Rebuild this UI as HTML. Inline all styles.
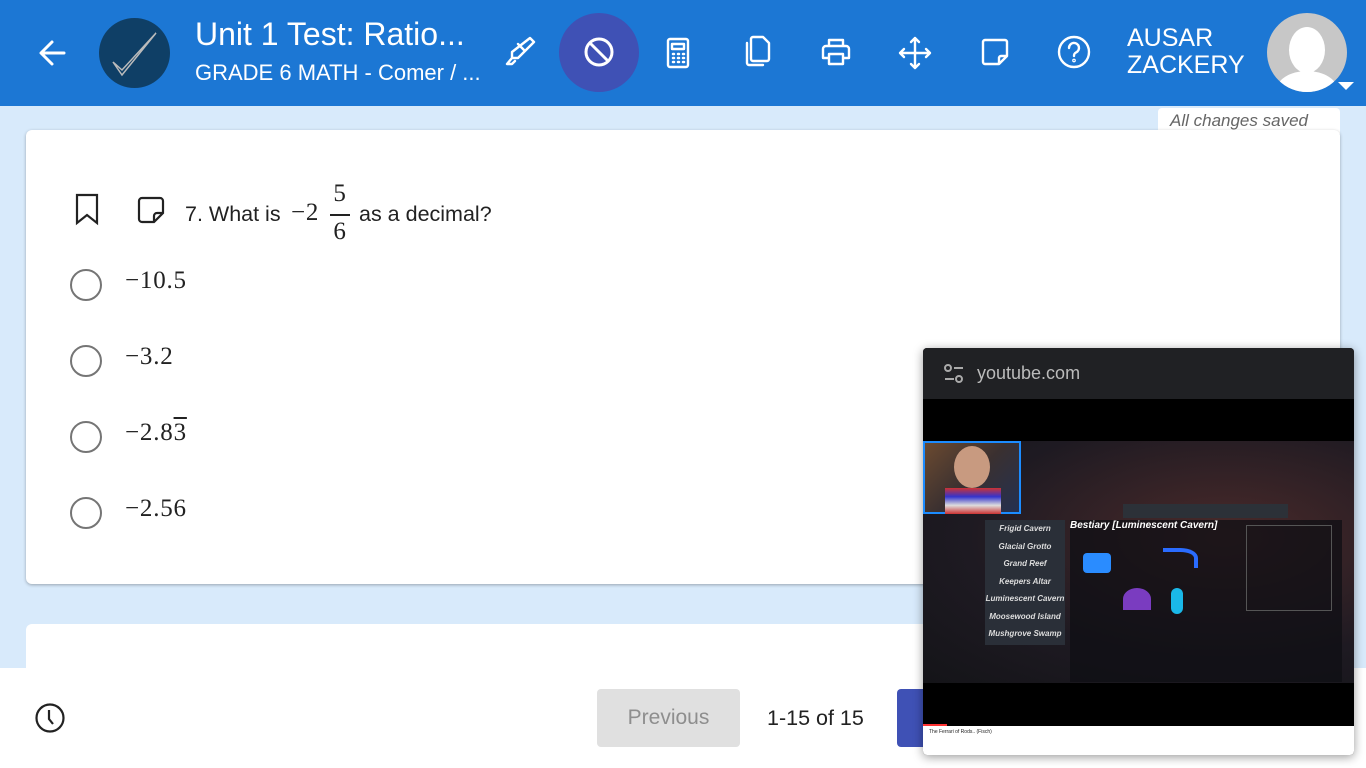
<!DOCTYPE html>
<html><head><meta charset="utf-8"><style>
*{margin:0;padding:0;box-sizing:border-box}
body{width:1366px;height:768px;overflow:hidden;background:#d8eafb;font-family:"Liberation Sans",Arial,sans-serif;position:relative}
.hdr{position:absolute;left:0;top:0;width:1366px;height:106px;background:#1c77d4;color:#fff}
.abs{position:absolute}
.ic{position:absolute;fill:none;stroke:#fff;stroke-width:2.4;stroke-linecap:round;stroke-linejoin:round}
.card{position:absolute;left:26px;top:130px;width:1314px;height:454px;background:#fff;border-radius:6px;box-shadow:0 1px 3px rgba(0,0,0,.3)}
.math{font-family:"Liberation Serif","DejaVu Serif",serif;font-size:25px;color:#222;letter-spacing:0.8px}
.radio{position:absolute;left:70px;width:32px;height:32px;border:2.5px solid #757575;border-radius:50%}
.opt{position:absolute;left:125px}
.foot{position:absolute;left:0;top:668px;width:1366px;height:100px;background:#fff}
</style></head><body>
<div class="hdr">
 <svg class="ic" style="left:36px;top:36px" width="34" height="34" viewBox="0 0 34 34"><path d="M28 17H6M16 6L5 17l11 11" stroke-width="3"/></svg>
 <div class="abs" style="left:99px;top:18px;width:71px;height:70px;border-radius:50%;background:#0f3f66"></div>
 <svg class="abs" style="left:110px;top:30px" width="50" height="48" viewBox="0 0 50 48"><path d="M3 32l9 13L46 3 12 40z" fill="none" stroke="#bbb" stroke-width="1.5"/></svg>
 <div class="abs" style="left:195px;top:16px;font-size:32px">Unit 1 Test: Ratio...</div>
 <div class="abs" style="left:195px;top:60px;font-size:22px">GRADE 6 MATH - Comer / ...</div>
 <svg class="ic" style="left:500px;top:34px" width="38" height="36" viewBox="0 0 38 36"><path d="M30 4l4 4-16 16-6 0 0-6z M12 24l-5 6 5 0 3-3 M18 10l6 6"/></svg>
 <div class="abs" style="left:559px;top:13px;width:80px;height:79px;border-radius:50%;background:#3f51b5"></div>
 <svg class="ic" style="left:583px;top:36px" width="32" height="32" viewBox="0 0 32 32"><circle cx="16" cy="16" r="13" stroke-width="3"/><path d="M7 7l18 18" stroke-width="3"/></svg>
 <svg class="ic" style="left:665px;top:37px" width="26" height="32" viewBox="0 0 26 32"><rect x="3" y="2" width="20" height="28" rx="2"/><path d="M7 7h12v5H7z"/><path d="M8 17h1M13 17h1M18 17h1M8 21h1M13 21h1M18 21h1M8 25h1M13 25h1M18 25h1" stroke-width="2.5"/></svg>
 <svg class="ic" style="left:744px;top:34px" width="28" height="34" viewBox="0 0 28 34"><path d="M9 3h10l6 6v16a2 2 0 0 1-2 2H9a2 2 0 0 1-2-2V5a2 2 0 0 1 2-2z"/><path d="M3 9v20a2 2 0 0 0 2 2h14"/></svg>
 <svg class="ic" style="left:820px;top:36px" width="32" height="32" viewBox="0 0 32 32"><path d="M9 10V4h14v6M6 10h20a3 3 0 0 1 3 3v9h-5M8 22H3v-9a3 3 0 0 1 3-3"/><rect x="9" y="18" width="14" height="10"/></svg>
 <svg class="ic" style="left:898px;top:36px" width="34" height="34" viewBox="0 0 34 34"><path d="M17 2v30M2 17h30M13 6l4-4 4 4M13 28l4 4 4-4M6 13l-4 4 4 4M28 13l4 4-4 4"/></svg>
 <svg class="ic" style="left:980px;top:37px" width="30" height="30" viewBox="0 0 30 30"><path d="M5 3h20a2 2 0 0 1 2 2v14l-8 8H5a2 2 0 0 1-2-2V5a2 2 0 0 1 2-2zM27 19h-6a2 2 0 0 0-2 2v6"/></svg>
 <svg class="ic" style="left:1057px;top:35px" width="34" height="34" viewBox="0 0 34 34"><circle cx="17" cy="17" r="15"/><path d="M12 13a5 5 0 1 1 7 4.5c-1.5.8-2 1.5-2 3.5"/><circle cx="17" cy="25.5" r=".6" stroke-width="2.5"/></svg>
 <div class="abs" style="left:1127px;top:25px;font-size:25px;line-height:27px">AUSAR<br>ZACKERY</div>
 <div class="abs" style="left:1267px;top:13px;width:80px;height:79px;border-radius:50%;background:#c7c7c7;overflow:hidden">
  <div class="abs" style="left:22px;top:14px;width:36px;height:46px;border-radius:50%;background:#fff"></div>
  <div class="abs" style="left:9px;top:58px;width:62px;height:40px;border-radius:50% 50% 0 0;background:#fff"></div>
 </div>
 <div class="abs" style="left:1338px;top:82px;width:0;height:0;border-left:8px solid transparent;border-right:8px solid transparent;border-top:8px solid #fff"></div>
</div>
<div class="abs" style="left:1158px;top:108px;width:182px;height:26px;background:#fff;border-radius:4px 4px 0 0;font-style:italic;color:#666;font-size:17px;padding:3px 0 0 12px">All changes saved</div>
<div class="card">
 <svg class="abs" style="left:48px;top:62px" width="26" height="34" viewBox="0 0 26 34"><path d="M3 3h20v28l-10-8-10 8z" fill="none" stroke="#222" stroke-width="2.2"/></svg>
 <svg class="abs" style="left:111px;top:66px" width="28" height="28" viewBox="0 0 28 28"><path d="M5 2h18a3 3 0 0 1 3 3v12l-9 9H5a3 3 0 0 1-3-3V5a3 3 0 0 1 3-3zM26 17h-6a3 3 0 0 0-3 3v6" fill="none" stroke="#222" stroke-width="2.2"/></svg>
 <div class="abs" style="left:159px;top:72px;font-size:21.5px;color:#222">7. What is</div>
 <div class="abs math" style="left:265px;top:69px">−2</div>
 <div class="abs math" style="left:304px;top:50px;width:20px;text-align:center">5</div>
 <div class="abs" style="left:304px;top:84px;width:20px;height:1.5px;background:#222"></div>
 <div class="abs math" style="left:304px;top:88px;width:20px;text-align:center">6</div>
 <div class="abs" style="left:333px;top:72px;font-size:21.5px;color:#222">as a decimal?</div>
</div>
<div class="radio" style="top:269px"></div><div class="opt math" style="top:267px">−10.5</div>
<div class="radio" style="top:345px"></div><div class="opt math" style="top:343px">−3.2</div>
<div class="radio" style="top:421px"></div><div class="opt math" style="top:419px">−2.8<span style="text-decoration:overline">3</span></div>
<div class="radio" style="top:497px"></div><div class="opt math" style="top:495px">−2.56</div>
<div class="abs" style="left:26px;top:624px;width:1314px;height:60px;background:#fff;border-radius:6px"></div>
<div class="foot">
 <svg class="abs" style="left:34px;top:34px" width="32" height="32" viewBox="0 0 32 32"><circle cx="16" cy="16" r="13.5" fill="none" stroke="#222" stroke-width="2.2"/><path d="M15 8v9l4 5" fill="none" stroke="#222" stroke-width="2.2"/></svg>
 <div class="abs" style="left:597px;top:21px;width:143px;height:58px;background:#e0e0e0;border-radius:4px;color:#8e8e8e;font-size:21px;text-align:center;line-height:58px">Previous</div>
 <div class="abs" style="left:767px;top:38px;font-size:21.5px;color:#222">1-15 of 15</div>
 <div class="abs" style="left:897px;top:21px;width:40px;height:58px;background:#3f51b5;border-radius:4px"></div>
</div>
<div class="abs" style="left:923px;top:348px;width:431px;height:407px;background:#000;box-shadow:0 2px 10px rgba(0,0,0,.4);border-radius:4px;overflow:hidden">
 <div class="abs" style="left:0;top:0;width:431px;height:51px;background:#202124"></div>
 <svg class="abs" style="left:20px;top:15px" width="22" height="22" viewBox="0 0 22 22"><circle cx="5" cy="5" r="3" fill="none" stroke="#aaa" stroke-width="2"/><path d="M11 5h9M2 16h9" stroke="#aaa" stroke-width="2"/><circle cx="16" cy="16" r="3" fill="none" stroke="#aaa" stroke-width="2"/></svg>
 <div class="abs" style="left:54px;top:15px;color:#bbb;font-size:18px">youtube.com</div>
 <div class="abs" style="left:0;top:93px;width:431px;height:242px;background:radial-gradient(ellipse at 70% 40%,#4a2a2a,#1e1a22 60%,#141418)"></div>
 <div class="abs" style="left:0;top:93px;width:98px;height:73px;background:linear-gradient(135deg,#6b4a30,#3a3030 50%,#243050);border:2px solid #1c8cff"></div>
 <div class="abs" style="left:31px;top:98px;width:36px;height:42px;border-radius:50%;background:#c89a80"></div>
 <div class="abs" style="left:22px;top:140px;width:56px;height:26px;background:linear-gradient(#c33,#33c,#ddd,#c33)"></div>
 <div class="abs" style="left:62px;top:172px;width:80px;height:125px;background:#2a2f38"></div>
 <div style="position:absolute;left:62px;top:172px;width:80px;font:italic bold 8px 'Liberation Sans';color:#ddd;text-align:center;line-height:17.5px">Frigid Cavern<br>Glacial Grotto<br>Grand Reef<br>Keepers Altar<br>Luminescent Cavern<br>Moosewood Island<br>Mushgrove Swamp</div>
 <div class="abs" style="left:147px;top:172px;width:272px;height:162px;background:rgba(15,15,20,.75)"></div>
 <div class="abs" style="left:147px;top:172px;color:#fff;font:italic bold 10px 'Liberation Sans'">Bestiary [Luminescent Cavern]</div>
 <div class="abs" style="left:160px;top:205px;width:28px;height:20px;background:#2a8cff;border-radius:4px"></div>
 <div class="abs" style="left:240px;top:200px;width:35px;height:20px;border-top:4px solid #2a6cff;border-right:4px solid #2a6cff;border-radius:0 50% 0 0"></div>
 <div class="abs" style="left:200px;top:240px;width:28px;height:22px;background:#7a3cc0;border-radius:50% 50% 0 0"></div>
 <div class="abs" style="left:248px;top:240px;width:12px;height:26px;background:#1ab8e8;border-radius:6px"></div>
 <div class="abs" style="left:323px;top:177px;width:86px;height:86px;border:1px solid #555"></div>
 <div class="abs" style="left:200px;top:156px;width:165px;height:14px;background:#2c3138"></div>
 <div class="abs" style="left:0;top:376px;width:24px;height:2px;background:#f33"></div>
 <div class="abs" style="left:0;top:378px;width:431px;height:30px;background:#fff"></div>
 <div class="abs" style="left:6px;top:381px;font-size:5px;color:#222">The Ferrari of Rods.. (Fisch)</div>
</div>
</body></html>
